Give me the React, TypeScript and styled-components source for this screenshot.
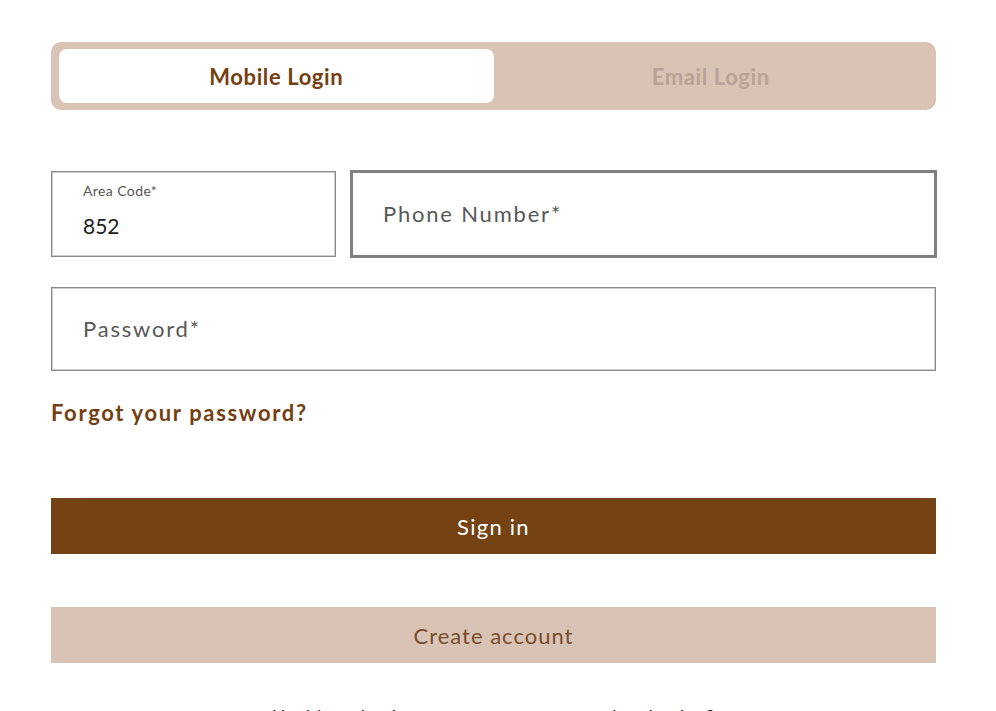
import React from "react";
import styled, { createGlobalStyle } from "styled-components";

const Global = createGlobalStyle`
  html, body { margin: 0; padding: 0; background: #fff; }
  body { font-family: Lato, "Open Sans", Arial, sans-serif; }
  * { box-sizing: border-box; }
`;

const Page = styled.div`
  width: 996px;
  height: 711px;
  overflow: hidden;
  padding: 42px 60px 0 51px;
`;

const Tabs = styled.div`
  display: grid;
  grid-template-columns: 1fr 1fr;
  height: 68px;
  padding: 7px 8px;
  background: #d8c3b5;
  border-radius: 10px;
`;

const Tab = styled.button<{ $active?: boolean }>`
  border: none;
  border-radius: 8px;
  background: ${(p) => (p.$active ? "#ffffff" : "transparent")};
  color: ${(p) => (p.$active ? "#743f12" : "#b9a296")};
  font-family: inherit;
  font-weight: 700;
  font-size: 22px;
  letter-spacing: 0.6px;
  cursor: pointer;
`;

const FieldRow = styled.div`
  display: flex;
  align-items: center;
  gap: 14px;
  margin-top: 60px;
  margin-right: -1px;
`;

const Field = styled.div<{ $focused?: boolean; $width?: number }>`
  height: ${(p) => (p.$focused ? 88 : 86)}px;
  ${(p) => (p.$width ? `width: ${p.$width}px;` : "flex: 1;")}
  border: ${(p) => (p.$focused ? "3px solid #808080" : "1px solid #8a8a8a")};
  box-shadow: ${(p) => (p.$focused ? "none" : "inset 0 0 0 1px #cdcdcd")};
  display: flex;
  flex-direction: column;
  justify-content: center;
  padding-left: ${(p) => (p.$focused ? 30 : 31)}px;
  background: #fff;
`;

const StackedField = styled(Field)`
  justify-content: flex-start;
  padding-top: 10px;
`;

const FloatLabel = styled.span`
  font-size: 14px;
  line-height: 17px;
  color: #555;
  letter-spacing: 0.4px;
`;

const Value = styled.span`
  font-size: 21px;
  line-height: 25px;
  color: #1d1d1d;
  margin-top: 14px;
`;

const Placeholder = styled.span`
  font-size: 22px;
  color: #585858;
  letter-spacing: 1.8px;
  margin-top: -2px;
`;

const PasswordField = styled(Field)`
  height: 84px;
  margin-top: 29px;
`;

const Forgot = styled.a`
  display: block;
  margin-top: 28px;
  font-size: 22px;
  font-weight: 700;
  color: #743f12;
  letter-spacing: 1.65px;
  text-decoration: none;
`;

const Button = styled.button<{ $primary?: boolean }>`
  display: block;
  width: 100%;
  height: 56px;
  border: none;
  font-family: inherit;
  font-size: 22px;
  letter-spacing: ${(p) => (p.$primary ? 1.25 : 1)}px;
  cursor: pointer;
  background: ${(p) => (p.$primary ? "#754313" : "#d8c3b5")};
  color: ${(p) => (p.$primary ? "#ffffff" : "#7a4d2c")};
`;

const SignIn = styled(Button)`
  margin-top: 72px;
`;

const Create = styled(Button)`
  margin-top: 53px;
`;

const Help = styled.p`
  margin: 42px 0 0;
  text-align: center;
  font-size: 18px;
  color: #222;
  letter-spacing: 0.7px;
`;

export default function App() {
  return (
    <>
      <Global />
      <Page>
        <Tabs>
          <Tab $active>Mobile Login</Tab>
          <Tab>Email Login</Tab>
        </Tabs>
        <FieldRow>
          <StackedField $width={285}>
            <FloatLabel>Area Code*</FloatLabel>
            <Value>852</Value>
          </StackedField>
          <Field $focused>
            <Placeholder>Phone Number*</Placeholder>
          </Field>
        </FieldRow>
        <PasswordField>
          <Placeholder>Password*</Placeholder>
        </PasswordField>
        <Forgot href="#">Forgot your password?</Forgot>
        <SignIn $primary>Sign in</SignIn>
        <Create>Create account</Create>
        <Help>Unable to log in to your account or need activation?</Help>
      </Page>
    </>
  );
}
